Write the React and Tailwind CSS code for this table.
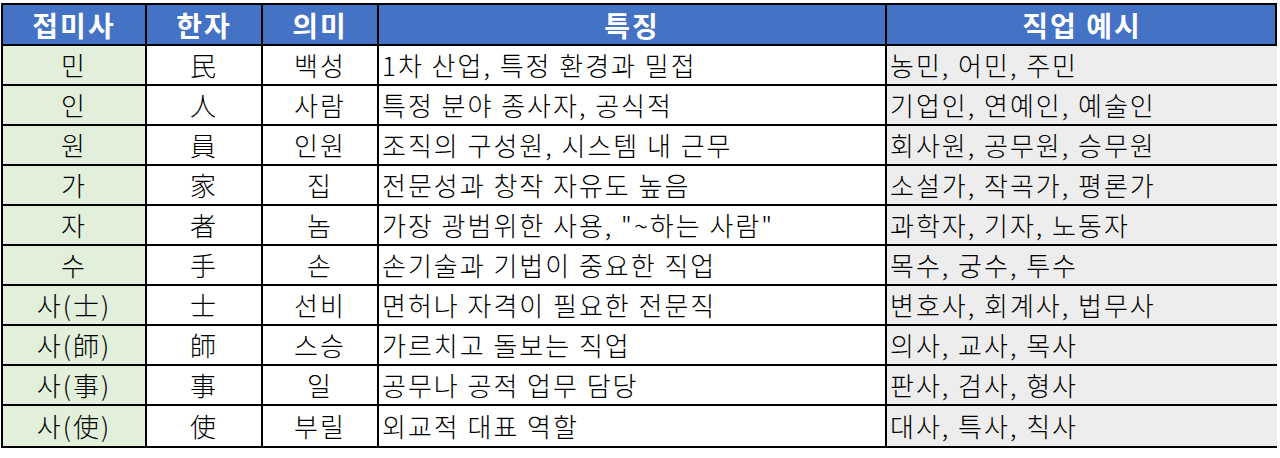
import React from 'react';

const rows = [
  ['민', '民', '백성', '1차 산업, 특정 환경과 밀접', '농민, 어민, 주민'],
  ['인', '人', '사람', '특정 분야 종사자, 공식적', '기업인, 연예인, 예술인'],
  ['원', '員', '인원', '조직의 구성원, 시스템 내 근무', '회사원, 공무원, 승무원'],
  ['가', '家', '집', '전문성과 창작 자유도 높음', '소설가, 작곡가, 평론가'],
  ['자', '者', '놈', '가장 광범위한 사용, "~하는 사람"', '과학자, 기자, 노동자'],
  ['수', '手', '손', '손기술과 기법이 중요한 직업', '목수, 궁수, 투수'],
  ['사(士)', '士', '선비', '면허나 자격이 필요한 전문직', '변호사, 회계사, 법무사'],
  ['사(師)', '師', '스승', '가르치고 돌보는 직업', '의사, 교사, 목사'],
  ['사(事)', '事', '일', '공무나 공적 업무 담당', '판사, 검사, 형사'],
  ['사(使)', '使', '부릴', '외교적 대표 역할', '대사, 특사, 칙사'],
];

const headers = ['접미사', '한자', '의미', '특징', '직업 예시'];
const cols = 'grid grid-cols-[144px_116px_116px_508px_390px]';

export default function App() {
  return (
    <div className="w-[1280px] h-[458px] bg-white pt-[3px] pl-[1px] font-['Noto_Sans_CJK_KR','Noto_Sans',sans-serif]">
      <div className="w-[1276px] border-2 border-black">
        <div className={`${cols} h-[41px] bg-[#4472c4] text-white font-bold text-[28px] tracking-[2px] border-b-2 border-black`}>
          {headers.map((h, i) => (
            <div
              key={h}
              className={`flex items-center justify-center leading-none ${i < 4 ? 'border-r-2 border-black' : ''}`}
            >
              {h}
            </div>
          ))}
        </div>
        {rows.map((r, ri) => (
          <div
            key={ri}
            className={`${cols} h-[40px] text-[26px] font-light tracking-[2px] text-black leading-none ${ri < rows.length - 1 ? 'border-b-2 border-black' : ''}`}
          >
            <div className="flex items-center justify-center bg-[#e2efda] border-r-2 border-black">{r[0]}</div>
            <div className="flex items-center justify-center border-r-2 border-black">{r[1]}</div>
            <div className="flex items-center justify-center border-r-2 border-black">{r[2]}</div>
            <div className="flex items-center pl-[3px] border-r-2 border-black whitespace-nowrap">{r[3]}</div>
            <div className="flex items-center pl-[3px] bg-[#ededed] whitespace-nowrap">{r[4]}</div>
          </div>
        ))}
      </div>
    </div>
  );
}
